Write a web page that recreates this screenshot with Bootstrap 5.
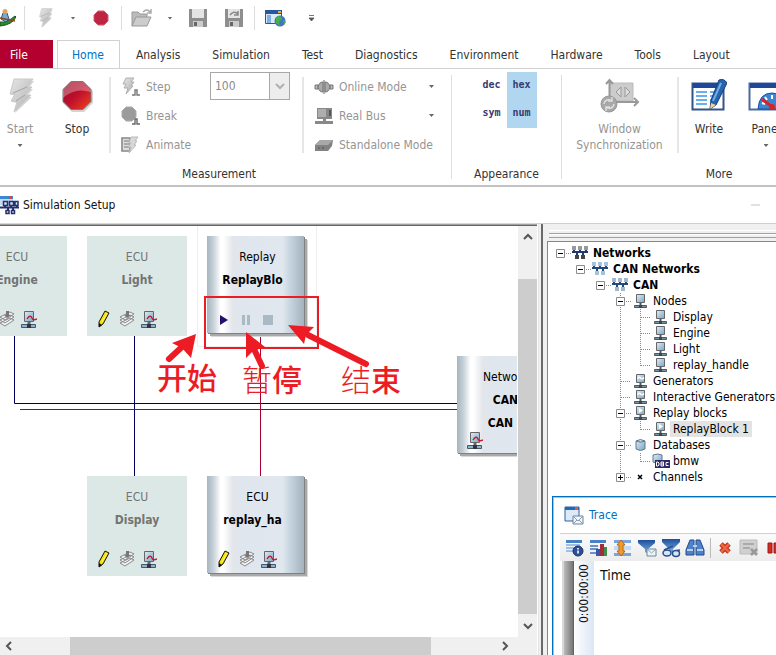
<!DOCTYPE html>
<html lang="en">
<head>
<meta charset="utf-8">
<meta name="viewport" content="width=device-width, initial-scale=1">
<title>Simulation Setup</title>
<link href="https://cdn.jsdelivr.net/npm/bootstrap@5.3.0/dist/css/bootstrap.min.css" rel="stylesheet">
<style>
body{font:12px/16px "DejaVu Sans Condensed","Roboto","Liberation Sans",sans-serif;color:#111;background:#fff;height:100vh;overflow:hidden}
button,select{font:inherit;color:inherit}
svg{display:block;flex:none}
.plain{background:none;border:0;padding:0;display:flex;align-items:center;justify-content:center;flex-shrink:0}
.i16{width:16px;height:16px}.i20{width:20px;height:20px}.i36{width:36px;height:36px}
/* quick access bar */
.quick{height:40px;padding-bottom:4px}
.w16{width:16px}.w24{width:24px}.w32{width:32px}.ms12{margin-left:12px}
.qsep{width:1px;height:24px;background:#dcdcdc;margin:0 8px}
.caret{width:5px;height:3px;background:#666;clip-path:polygon(0 0,100% 0,50% 100%)}
/* tabs */
.tabs{height:29px;border-bottom:1px solid #d2d2d2;flex-wrap:nowrap;overflow:hidden}
.tabs a{color:#333;text-decoration:none;padding:7px 16px 5px;height:29px;white-space:nowrap}
.tabs a.file{background:#b4002f;color:#fff;padding:7px 25px 5px 10px;margin-right:4px;height:28px}
.tabs a.on{color:#0070c8;border:1px solid #d2d2d2;border-bottom-color:#fff;background:#fff;padding:6px 15px 5px 14px}
/* ribbon */
.ribbon{height:118px;border-bottom:2px solid #c2c2c2;padding-top:3px;color:#333;overflow:hidden}
.grp{display:flex;flex-direction:column;flex:none}
.grp-body{height:94px;display:flex}
.grp-label{text-align:center}
.fsep{width:1px;height:104px;background:#dedede;flex:none;margin-top:3px}
.ssep{width:2px;height:76px;background:#e6e6e6;flex:none;margin-top:5px}
.off{color:#959595}
.big{flex-direction:column;justify-content:flex-start;padding-top:6px}
.big span{margin-top:7px}
.big .caret{margin-top:7px}
.g-start{width:40px}.g-stop{width:69px;padding-left:5px}
.row3{height:29px;display:flex;align-items:center;gap:5px;white-space:nowrap}
.stepcol{width:86px;margin-left:10px}
.buscol{margin-left:10px;width:137px}
.buscol .caret{margin-left:auto;margin-right:17px}
.combo{width:80px;height:28px;border:1px solid #a8a8a8;border-radius:0;appearance:none;padding:0 4px;color:#8a8a8a;opacity:1;
background:#fff linear-gradient(90deg,#a8a8a8 1px,#ededed 1px) right/20px 100% no-repeat}
.combo-wrap{display:grid;margin-left:3px;width:92px;height:28px}
.combo-wrap>*{grid-area:1/1}
.combo-wrap svg{margin:8px 0 0 64px;pointer-events:none}
.fmt{display:grid;grid-template-columns:30px 30px;grid-auto-rows:28px;margin:0 auto;align-self:flex-start;font:bold 10px/12px "DejaVu Sans Mono",monospace;color:#3a3a70}
.fmt .plain{padding-bottom:3px}
.fmt .lit{background:#b1d6f0}
.g-meas{width:451px}.g-meas .grp-label{padding-right:13px}
.g-app{width:109px}.g-more{width:314px}
.g-sync{width:115px}.g-write{width:60px}.g-panel{width:54px}
/* window title */
.wtitle{height:36px;gap:4px}
/* work area */
.work{min-height:0}
.left{min-width:0;border-top:3px solid #6a6a6a;border-image:linear-gradient(#d8d8d8 1px,#a0a0a0 1px,#a0a0a0 2px,#666 2px) 3 0 0 0;display:grid;grid-template-columns:minmax(0,1fr) 20px;grid-template-rows:minmax(0,1fr) 18px}
.canvas{position:relative;overflow:hidden;background:#fff}
.canvas>*{position:absolute}
.vbar{background:#f0f0f0;display:flex;flex-direction:column;align-items:center;border-left:1px solid #fff}
.vbar i{flex:1;width:100%;background:#cdcdcd;margin:30px 0 0}
.hbar{background:#f0f0f0;display:flex;align-items:center;grid-column:1/3}
.hbar i{height:100%;flex:1;background:#cdcdcd;margin:0 69px 0 51px}
.edge{width:10px;background:linear-gradient(90deg,#fff 1px,#e4e4e4 1px,#e4e4e4 2px,#f0f0f0 2px,#f0f0f0 4px,#696969 4px,#696969 6px,#f0f0f0 6px);border-top:1px solid #cfcfcf;flex:none}
/* diagram nodes */
.node{width:100px;height:100px;background:#dbe8e6;color:#737373;text-align:center;padding-top:13px}
.node b,.node span{display:block;white-space:nowrap}
.node b{margin-top:7px}
.node.solid{width:97px;height:97px;color:#000;background:linear-gradient(90deg,#a5b5c0,#c9d3d9 7%,#fff 14%,#fff 17%,#e4e6ea 26%,#dfe6ed 32%,#e0e7ee 78%,#c6d4de 86%,#a3b2bd);box-shadow:1px 1px 0 #808080,3px 3px 0 #a9a9a9,4px 4px 0 #d8d8d8}
.tools{display:flex;align-items:center;gap:6px;padding-left:10px;margin-top:22px}
.tools svg{width:16px;height:18px}
.n1{left:-33px;top:10px}.n2{left:87px;top:10px}.n3{left:207px;top:10px}
.n4{left:87px;top:250px}.n5{left:207px;top:250px}.n6{left:457px;top:130px}
.n3 b,.n5 b{padding-right:6px}.n3 span,.n5 span{padding-left:4px}
.n6 .tools{margin-top:0}
.n6 b+b{padding-right:10px}
.halo{left:197px;top:-1px;width:120px;height:122px;border:1px solid #eee}
.note{color:#ed1c24;font:500 30px/36px "Noto Sans CJK SC",sans-serif;white-space:nowrap}
.note i{font-style:normal;font-weight:300}
.t1{left:157px;top:132px}.t2{left:242px;top:134px}.t3{left:341px;top:134px}
/* right side */
.right{width:229px;background:#f0f0f0;border-top:1px solid #cfcfcf;flex:none;overflow:hidden}
.grip{height:4px;margin-left:2px;border-top:1px solid #fff;border-bottom:1px solid #a0a0a0;margin-top:2px}
.dock{border:1px solid #828790;border-width:1px 0 0 1px;background:#fff;margin-top:3px;min-height:0}
.tree{margin:3px 0 0 3px;color:#000}
.tree li{display:flex;height:16px;white-space:nowrap;align-items:center}
.tree svg{width:20px;height:16px}
.tree li>svg:nth-last-child(2){margin-left:-1px}
.tree button{width:20px;height:16px}
.tree li>span{padding:0 3px}
.tree .sel{background:#e3e3e3}
.trace{border:1px solid #0070c0;border-width:1px 0 0 1px;margin:11px 0 0 4px;box-shadow:inset 1px 1px 0 #0070c066}
.trace-title{height:36px;padding-left:11px;gap:5px;color:#0070c0}
.tbar{height:28px;margin-left:7px;border-top:1px solid #d0d0d0;background:linear-gradient(#fbfbfb,#ececec);padding-left:3px}
.tbar .qsep{height:20px;margin:0 2px 0 3px;background:#bbb;flex-shrink:0}
.tbody{min-height:0;margin-left:7px}
.strip{width:12px;background:linear-gradient(90deg,#d8d8d8 2px,#bbb 2px,#777 90%,#555);margin-left:2px}
.ruler{width:20px;background:linear-gradient(90deg,#fff,#dbe6f5);writing-mode:vertical-rl;line-height:20px;padding-top:3px;display:flex}
.ruler span{transform:rotate(180deg)}
.time{font-size:14px;line-height:20px;padding:4px 6px}
</style>
<script src="https://cdn.jsdelivr.net/npm/bootstrap@5.3.0/dist/js/bootstrap.bundle.min.js"></script>
</head>
<body class="d-flex flex-column">
<svg width="0" height="0" class="position-absolute" aria-hidden="true">
<defs>
<linearGradient id="gy" x2="1" y2="1"><stop stop-color="#e6e6e6"/><stop offset="1" stop-color="#b0b0b0"/></linearGradient>
<linearGradient id="rd" x2="1" y2="1"><stop stop-color="#8c0a26"/><stop offset=".5" stop-color="#c0102c"/><stop offset="1" stop-color="#f0451c"/></linearGradient>
<linearGradient id="bl" x2="1" y2="1"><stop stop-color="#e0edf5"/><stop offset="1" stop-color="#78a6c8"/></linearGradient>
<linearGradient id="fn" x2="0" y2="1"><stop stop-color="#1d4f9c"/><stop offset="1" stop-color="#7fb2e8"/></linearGradient>
</defs>
<symbol id="bolt" viewBox="0 0 36 36"><path d="M14 3h18l-6 8h5l-7 8h6L13 35l3-10-6-1 4-7H9z" fill="#aaa" opacity=".5"/><path d="M12 1h19l-6 8h5l-7 8h6L12 34l3-10-6-1 4-7H8z" fill="url(#gy)" stroke="#c9c9c9"/><path d="M11 15l14-6M14 23l9-6" stroke="#a4a4a4"/></symbol>
<symbol id="step" viewBox="0 0 20 20"><path d="M5 1h8l-3 4h3l-3 4h2l-7 8 2-6H3l2-4H2z" fill="url(#gy)" stroke="#b0b0b0"/><path d="M11 18h3v-5h2v5h3" fill="none" stroke="#777" stroke-width="1.4"/></symbol>
<symbol id="brk" viewBox="0 0 20 20"><path d="M5 1h6l4 4v6l-4 4H5l-4-4V5z" fill="#9b9b9b" stroke="#aaa"/><path d="M11 18h3v-5h2v5h3" fill="none" stroke="#666" stroke-width="1.4"/></symbol>
<symbol id="anim" viewBox="0 0 20 20"><path d="M1 3h8v13H1z" fill="#ddd" stroke="#888" stroke-width="1.6"/><path d="M3 6h5M3 9h5M3 12h5" stroke="#777"/><path d="M10 2h7l-3 4h2l-3 4h2l-7 8 2-6H7l3-4H8z" fill="#d8d8d8" stroke="#bbb"/></symbol>
<symbol id="plug" viewBox="0 0 20 20"><path d="M1 8h3v4H1zM16 8h3v4h-3z" fill="#bbb" stroke="#777"/><path d="M9 5v10q-4 0-5-5 1-5 5-5zM11 5v10q4 0 5-5-1-5-5-5z" fill="#aaa" stroke="#737373"/><path d="M10 3v14" stroke="#666"/></symbol>
<symbol id="busx" viewBox="0 0 20 20"><path d="M3 2h15v11H3z" fill="#888"/><path d="M4 3h8v8H4z" fill="#aeaeae"/><path d="M15 4h2v6h-2z" fill="#555"/><path d="M9 13h3v4H9z" fill="#888"/><path d="M1 15h18v3H1z" fill="#888"/></symbol>
<symbol id="box" viewBox="0 0 20 20"><path d="M1 10l5-5h13l-1 6-4 5H1z" fill="#828282"/><path d="M1 10l5-5h13l-5 5z" fill="#a8a8a8"/><path d="M4 13h2M8 13h2" stroke="#555"/></symbol>
<symbol id="disk" viewBox="0 0 20 20"><path d="M1 1h18v18H1z" fill="#8e8e8e"/><path d="M4 1h12v9H4z" fill="#e4e4e4"/><path d="M5 13h10v6H5z" fill="#ccc"/><path d="M6 14h3v4H6z" fill="#666"/></symbol>
<symbol id="node" viewBox="0 0 20 16"><path d="M6.500 1.500h8v8h-8z" fill="url(#bl)" stroke="#666"/><path d="M10.500 10v3" stroke="#555" stroke-width="2"/><path d="M4.500 12.500h12v2h-12z" fill="#7196b0" stroke="#555"/><path d="M9 12h3v3H9z" fill="#444"/></symbol>
<symbol id="gen" viewBox="0 0 20 16"><use href="#node"/><path d="M7.500 6q1.500-3 3-1T14 4.500" fill="none" stroke="#fff" stroke-width="1.300"/></symbol>
<symbol id="rep" viewBox="0 0 20 16"><use href="#node"/><path d="M9 3l4 2.500L9 8z" fill="#fff"/></symbol>
<symbol id="db" viewBox="0 0 20 16"><path d="M6 4v8q4.500 3 9 0V4q-4.500-3-9 0z" fill="url(#bl)" stroke="#64788c"/><path d="M6 4q4.500 2.500 9 0" fill="none" stroke="#64788c"/></symbol>
<symbol id="dbc" viewBox="0 0 20 16"><path d="M3 2v7q4.500 3 9 0V2q-4.500-2-9 0z" fill="url(#bl)" stroke="#64788c"/><path d="M5 7h15v8H5z" fill="#2e2a68"/><path d="M6.500 9v4h1.500l1-1v-2l-1-1zM11 9h2.500v4H11zM11 11h2M18.500 9.500H16v3h2.500" fill="none" stroke="#fff"/></symbol>
<symbol id="minus" viewBox="0 0 20 16"><path d="M15 8.500h5" stroke="#888" stroke-dasharray="1 1"/><path d="M5.500 4.500h8v8h-8z" fill="#fff" stroke="#8c8c8c"/><path d="M7 8.500h5" stroke="#000"/></symbol>
<symbol id="plus" viewBox="0 0 20 16"><path d="M9.500 0v4" stroke="#888" stroke-dasharray="1 1"/><use href="#minus"/><path d="M9.500 6v5" stroke="#000"/></symbol>
<symbol id="tv" viewBox="0 0 20 16"><path d="M9.500 0v16" stroke="#888" stroke-dasharray="1 1"/></symbol>
<symbol id="tt" viewBox="0 0 20 16"><path d="M9.500 0v16M10 8.500h10" stroke="#888" stroke-dasharray="1 1"/></symbol>
<symbol id="tl" viewBox="0 0 20 16"><path d="M9.500 0v9M10 8.500h10" stroke="#888" stroke-dasharray="1 1"/></symbol>
<symbol id="pen" viewBox="0 0 16 18"><path d="M8 1l4 2-6 11-4 3V12z" fill="#f5e400" stroke="#111"/><path d="M2 13l3 2-3 2z" fill="#111"/><path d="M10 3L5 12" stroke="#fff27a"/></symbol>
<symbol id="stack" viewBox="0 0 16 18"><path d="M1 13l5 3 9-6-4-2zM1 10l5 3 9-6-4-2zM1 7l5 3 9-6-4-2z" fill="#f4f4f4" stroke="#888"/><path d="M7 1h3v4h2L8 8 5 5h2z" fill="#777"/></symbol>
<symbol id="pc" viewBox="0 0 16 18"><path d="M3.500 1.500h9v10h-9z" fill="url(#bl)" stroke="#666"/><path d="M8 12v3" stroke="#666" stroke-width="3"/><path d="M.5 14.500h14v3H.5z" fill="#8db3cf" stroke="#445868"/><path d="M6 14h4v4H6z" fill="#334"/><path d="M6 9q3-5 5-1 1 3 5 1" fill="none" stroke="#c01c30" stroke-width="1.400"/></symbol>
</svg>

<header class="quick d-flex align-items-center">
<button class="plain w16" aria-label="CANoe menu"><svg width="16" height="18" viewBox="0 0 16 18"><path d="M0 13q7 1 15-6l1 1q-4 8-16 9z" fill="#2b8a2e" stroke="#1c521f"/><path d="M3 4h4l2 6-3 3-5-3z" fill="#78a9d6" stroke="#34567d"/><circle cx="5" cy="2.500" r="2.500" fill="#e3a35b"/><path d="M0 9l15 3" stroke="#8b4a1e" stroke-width="1.500"/></svg></button>
<span class="qsep"></span>
<button class="plain w24" aria-label="Start"><svg class="i20"><use href="#bolt"/></svg></button>
<button class="plain w32" aria-label="Start options"><span class="caret"></span></button>
<button class="plain w24" aria-label="Stop"><svg width="16" height="16" viewBox="0 0 16 16"><path d="M5 1h6l4 4v6l-4 4H5l-4-4V5z" fill="#bf2443" stroke="#cf5a70"/></svg></button>
<span class="qsep"></span>
<button class="plain w24" aria-label="Open"><svg width="22" height="20" viewBox="0 0 22 20"><path d="M1 18V4h6l2 2h7v3" fill="#bbb" stroke="#999"/><path d="M1 18L5 9h15l-4 9z" fill="#ccc" stroke="#999"/><path d="M12 4q4-4 7 0M20 1v4h-4" fill="none" stroke="#aaa" stroke-width="1.500"/></svg></button>
<button class="plain w32" aria-label="Recent files"><span class="caret"></span></button>
<button class="plain w24" aria-label="Save"><svg class="i20"><use href="#disk"/></svg></button>
<button class="plain w24 ms12" aria-label="Save as"><svg class="i20" viewBox="0 0 20 20"><use href="#disk"/><path d="M6 7q4-5 8-1M14 3v4h-4" fill="none" stroke="#888" stroke-width="1.500"/></svg></button>
<span class="qsep"></span>
<button class="plain w24" aria-label="Desktops"><svg width="22" height="20" viewBox="0 0 22 20"><path d="M1.500 2.500h16v13h-16z" fill="#d8e9fa" stroke="#2a56a0"/><path d="M1 2h17v4H1z" fill="#2a56a0"/><path d="M14 3h3v2h-3z" fill="#e8b02c"/><path d="M3 7h4v8H3z" fill="#7fb0e4"/><circle cx="16" cy="13" r="5.500" fill="#3d76c4"/><path d="M14 8q4 0 4 3l-3 3 1 4-4-3v-5zM19 12l3 2-2 3z" fill="#4cad4c"/></svg></button>
<button class="plain w24 ms12" aria-label="Customize"><svg width="7" height="7" viewBox="0 0 7 7"><path d="M1 .5h5M1 3h5L3.500 6z" stroke="#555" fill="#555" stroke-width=".8"/></svg></button>
</header>

<nav class="tabs d-flex">
<a href="#" class="file">File</a><a href="#" class="on">Home</a><a href="#">Analysis</a><a href="#">Simulation</a><a href="#">Test</a><a href="#">Diagnostics</a><a href="#">Environment</a><a href="#">Hardware</a><a href="#">Tools</a><a href="#">Layout</a>
</nav>

<section class="ribbon d-flex">
<div class="grp g-meas">
<div class="grp-body">
<button class="plain big off g-start"><svg class="i36"><use href="#bolt"/></svg><span>Start</span><i class="caret"></i></button>
<button class="plain big g-stop"><svg class="i36" viewBox="0 0 36 36"><path d="M12 3h12l9 9v12l-9 9H12l-9-9V12z" fill="#aaa" opacity=".5" transform="translate(1 1)"/><path d="M12 3.500h12l8 8v12l-8 8H12l-8-8v-12z" fill="url(#rd)" stroke="#777"/><path d="M12 4h12l8 8v2Q16 9 4 20v-8z" fill="#fff" opacity=".3"/></svg><span>Stop</span></button>
<span class="ssep"></span>
<div class="stepcol off">
<div class="row3"><svg class="i20"><use href="#step"/></svg>Step</div>
<div class="row3"><svg class="i20"><use href="#brk"/></svg>Break</div>
<div class="row3"><svg class="i20"><use href="#anim"/></svg>Animate</div>
</div>
<div class="combo-wrap"><select class="combo" disabled aria-label="Step size"><option>100</option></select><svg width="12" height="12" viewBox="0 0 12 12"><path d="M2 4l4 4 4-4" fill="none" stroke="#b0b0b0" stroke-width="2"/></svg></div>
<span class="ssep"></span>
<div class="buscol off">
<div class="row3"><svg class="i20"><use href="#plug"/></svg>Online Mode<i class="caret"></i></div>
<div class="row3"><svg class="i20"><use href="#busx"/></svg>Real Bus<i class="caret"></i></div>
<div class="row3"><svg class="i20"><use href="#box"/></svg>Standalone Mode</div>
</div>
</div>
<div class="grp-label">Measurement</div>
</div>
<span class="fsep"></span>
<div class="grp g-app">
<div class="grp-body"><div class="fmt"><button class="plain">dec</button><button class="plain lit">hex</button><button class="plain">sym</button><button class="plain lit">num</button></div></div>
<div class="grp-label">Appearance</div>
</div>
<span class="fsep"></span>
<div class="grp g-more">
<div class="grp-body">
<button class="plain big off g-sync"><svg width="40" height="36" viewBox="0 0 40 36"><path d="M10 5h23v18H10z" fill="#ccc" stroke="#bbb"/><path d="M9.500 34V3M6 6l3.500-4L13 6M9 24h28M34 20l4 4-4 4" fill="none" stroke="#999" stroke-width="2"/><path d="M21 9v10l-5-5zM25 9v10l5-5z" fill="#ddd" stroke="#999"/><circle cx="9" cy="26" r="8" fill="#a8a8a8" stroke="#999"/><path d="M4 26q1-5 6-4l2 1M14 26q-1 5-6 4l-2-1M12 19v4H8M6 33v-4h4" fill="none" stroke="#ddd" stroke-width="1.500"/></svg><span>Window<br>Synchronization</span></button>
<span class="ssep"></span>
<button class="plain big g-write"><svg class="i36" viewBox="0 0 36 36"><path d="M1.500 5.500h31v26h-31z" fill="#fff" stroke="#34548c" stroke-width="2"/><path d="M2 5h30v5H2z" fill="#1d489a"/><path d="M5 14h11M5 18h11M5 22h11M5 26h11M19 14h10M19 18h8M19 22h6M19 26h4" stroke="#68b0ee" stroke-width="2"/><path d="M28 2q5-2 8 3L25 27l-6 4 1-9z" fill="#2464b0" stroke="#173c74"/><path d="M30 5L22 23" stroke="#72aae2" stroke-width="2"/><path d="M20 25l5 2-6 4z" fill="#f4cf96"/></svg><span>Write</span></button>
<button class="plain big g-panel"><svg class="i36" viewBox="0 0 36 36"><path d="M1.500 5.500h32v26h-32z" fill="#fff" stroke="#4b6ba0" stroke-width="2"/><path d="M2 5h32v5H2z" fill="#1d489a"/><path d="M10 31q1-16 14-16t13 16z" fill="#3a86d6" stroke="#17549c"/><path d="M14 25l3 1M17 19l2 3M24 17v4" stroke="#fff" stroke-width="2"/><path d="M14 21l9 7" stroke="#d22" stroke-width="3"/><circle cx="24" cy="29" r="3" fill="#d22"/></svg><span>Panel</span><i class="caret"></i></button>
</div>
<div class="grp-label">More</div>
</div>
</section>

<div class="wtitle d-flex align-items-center pe-3 flex-shrink-0">
<svg width="19" height="20" viewBox="0 0 19 20"><path d="M0 1h13v9H0z" fill="#c4ddf4"/><path d="M0 1h13v3H0z" fill="#3e86cf"/><path d="M9 1h3v3H9z" fill="#e5452b"/><path d="M0 12.500h19M5 6v6M11 6v6M17 6v6M8 13v4M13 13v4" stroke="#26306e" stroke-width="2"/><path d="M3.500 6.500h4v4h-4zM9.500 6.500h4v4h-4zM15 6.500h3v4h-3zM6 15.500h3v3H6zM11.500 15.500h3v3h-3z" fill="#cfe2f2" stroke="#26306e" stroke-width="1.500"/></svg>
<span>Simulation Setup</span>
<button class="plain ms-auto" aria-label="Minimize"><svg width="9" height="3"><path d="M0 1h9" stroke="#c4c4c4"/></svg></button>
</div>

<main class="work d-flex flex-fill">
<section class="left flex-fill">
<div class="canvas">
<div class="halo"></div>
<svg width="520" height="420" viewBox="0 226 520 420"><path d="M14.500 336v67.500H457M134.500 336v140" fill="none" stroke="#000060"/><path d="M20 409.500h437" stroke="#a80030"/><path d="M260.500 336v140" stroke="#a80030"/></svg>
<div class="node n1"><span>ECU</span><b>Engine</b><div class="tools"><svg><use href="#pen"/></svg><svg><use href="#stack"/></svg><svg><use href="#pc"/></svg></div></div>
<div class="node n2"><span>ECU</span><b>Light</b><div class="tools"><svg><use href="#pen"/></svg><svg><use href="#stack"/></svg><svg><use href="#pc"/></svg></div></div>
<div class="node solid n3"><span>Replay</span><b>ReplayBlo</b><div class="tools"><svg viewBox="0 0 16 18"><path d="M3 5l8 5-8 5z" fill="#23106e"/></svg><svg viewBox="0 0 16 18"><path d="M3 5h3v10H3zM8 5h3v10H8z" fill="#a9bac4"/></svg><svg viewBox="0 0 16 18"><path d="M2 5h10v10H2z" fill="#a9bac4"/></svg></div></div>
<div class="node n4"><span>ECU</span><b>Display</b><div class="tools"><svg><use href="#pen"/></svg><svg><use href="#stack"/></svg><svg><use href="#pc"/></svg></div></div>
<div class="node solid n5"><span>ECU</span><b>replay_ha</b><div class="tools"><svg><use href="#pen"/></svg><svg><use href="#stack"/></svg><svg><use href="#pc"/></svg></div></div>
<div class="node solid n6"><span>Network</span><b>CAN</b><b>CAN</b><div class="tools"><svg><use href="#pc"/></svg></div></div>
<svg width="420" height="180" viewBox="0 226 420 180"><path d="M205 297h113v51H205z" fill="none" stroke="#ed1c24" stroke-width="2"/><path d="M169 359l15-14M262 366l-9-19M366 364l-58-29" stroke="#ed1c24" stroke-width="6" stroke-linecap="round"/><path d="M196 334l-24 9 10 5 9 10zM246 332v26l7-7 12-4zM288 325l16 19 2-9 8-8z" fill="#ed1c24"/></svg>
<div class="note t1">开始</div><div class="note t2"><i>暂</i>停</div><div class="note t3"><i>结</i>束</div>
</div>
<div class="vbar"><svg width="12" height="23" viewBox="0 0 12 23"><path d="M2 13l4-4 4 4" fill="none" stroke="#555" stroke-width="2"/></svg><i></i><svg width="12" height="23" viewBox="0 0 12 23"><path d="M2 10l4 4 4-4" fill="none" stroke="#555" stroke-width="2"/></svg></div>
<div class="hbar"><svg width="19" height="12" viewBox="0 0 19 12"><path d="M11 2L7 6l4 4" fill="none" stroke="#555" stroke-width="2"/></svg><i></i><svg width="37" height="12" viewBox="0 0 37 12"><path d="M3 2l4 4-4 4" fill="none" stroke="#555" stroke-width="2"/></svg></div>
</section>
<div class="edge"></div>
<aside class="right d-flex flex-column">
<div class="pt-1"><div class="grip"></div></div><div class="grip mt-0"></div>
<div class="dock flex-fill d-flex flex-column">
<ul class="tree list-unstyled">
<li><button class="plain" aria-label="Collapse"><svg><use href="#minus"/></svg></button><svg viewBox="0 0 20 16"><path d="M2 7h16M4 3v4M10 3v4M16 3v4M7 7v5M13 7v5" stroke="#1f3a70" stroke-width="2"/><path d="M2 1h4v4H2zM8 1h4v4H8zM14 1h4v4h-4z" fill="#999"/><path d="M5 10h4v4H5zM11 10h4v4h-4z" fill="#444"/></svg><span class="fw-bold">Networks</span></li>
<li><svg></svg><button class="plain" aria-label="Collapse"><svg><use href="#minus"/></svg></button><svg viewBox="0 0 20 16"><path d="M2 7h16M4 3v4M10 3v4M16 3v4M7 7v5M13 7v5" stroke="#1f4a80" stroke-width="2"/><path d="M2 1h4v4H2zM8 1h4v4H8zM14 1h4v4h-4zM5 10h4v4H5zM11 10h4v4h-4z" fill="#a4c4dc"/></svg><span class="fw-bold">CAN Networks</span></li>
<li><svg></svg><svg></svg><button class="plain" aria-label="Collapse"><svg><use href="#minus"/></svg></button><svg viewBox="0 0 20 16"><path d="M2 7h16M4 3v4M10 3v4M16 3v4M7 7v5M13 7v5" stroke="#1f4a80" stroke-width="2"/><path d="M2 1h4v4H2zM8 1h4v4H8zM14 1h4v4h-4zM5 10h4v4H5zM11 10h4v4h-4z" fill="#a4b8cc"/></svg><span class="fw-bold">CAN</span></li>
<li><svg></svg><svg></svg><svg></svg><button class="plain" aria-label="Collapse"><svg viewBox="0 0 20 16"><use href="#tv"/><use href="#minus"/></svg></button><svg><use href="#node"/></svg><span>Nodes</span></li>
<li><svg></svg><svg></svg><svg></svg><svg><use href="#tv"/></svg><svg><use href="#tt"/></svg><svg><use href="#node"/></svg><span>Display</span></li>
<li><svg></svg><svg></svg><svg></svg><svg><use href="#tv"/></svg><svg><use href="#tt"/></svg><svg><use href="#node"/></svg><span>Engine</span></li>
<li><svg></svg><svg></svg><svg></svg><svg><use href="#tv"/></svg><svg><use href="#tt"/></svg><svg><use href="#node"/></svg><span>Light</span></li>
<li><svg></svg><svg></svg><svg></svg><svg><use href="#tv"/></svg><svg><use href="#tl"/></svg><svg><use href="#node"/></svg><span>replay_handle</span></li>
<li><svg></svg><svg></svg><svg></svg><svg><use href="#tt"/></svg><svg><use href="#gen"/></svg><span>Generators</span></li>
<li><svg></svg><svg></svg><svg></svg><svg><use href="#tt"/></svg><svg><use href="#gen"/></svg><span>Interactive Generators</span></li>
<li><svg></svg><svg></svg><svg></svg><button class="plain" aria-label="Collapse"><svg viewBox="0 0 20 16"><use href="#tv"/><use href="#minus"/></svg></button><svg><use href="#rep"/></svg><span>Replay blocks</span></li>
<li><svg></svg><svg></svg><svg></svg><svg><use href="#tv"/></svg><svg><use href="#tl"/></svg><svg><use href="#rep"/></svg><span class="sel">ReplayBlock 1</span></li>
<li><svg></svg><svg></svg><svg></svg><button class="plain" aria-label="Collapse"><svg viewBox="0 0 20 16"><use href="#tv"/><use href="#minus"/></svg></button><svg><use href="#db"/></svg><span>Databases</span></li>
<li><svg></svg><svg></svg><svg></svg><svg><use href="#tv"/></svg><svg><use href="#tl"/></svg><svg><use href="#dbc"/></svg><span>bmw</span></li>
<li><svg></svg><svg></svg><svg></svg><button class="plain" aria-label="Expand"><svg><use href="#plus"/></svg></button><svg viewBox="0 0 20 16"><path d="M8 6l4 4M12 6l-4 4" stroke="#000" stroke-width="1.500"/></svg><span>Channels</span></li>
</ul>
<div class="trace flex-fill d-flex flex-column">
<div class="trace-title d-flex align-items-center"><svg width="20" height="19" viewBox="0 0 20 19"><path d="M1 1h14v14H1z" fill="#dceaf8" stroke="#2a60a4"/><path d="M1 1h14v3H1z" fill="#2168b8"/><path d="M11 1h3v3h-3z" fill="#f05a2a"/><path d="M9 10h10v8H9z" fill="#f2f6fa" stroke="#6a8098"/><path d="M9 10l5 5 5-5M9 18l4-4M19 18l-4-4" fill="none" stroke="#8ba0b4"/></svg>Trace</div>
<div class="tbar d-flex align-items-center">
<button class="plain w24" aria-label="Details"><svg class="i20" viewBox="0 0 20 20"><path d="M1 2h16v3H1z" fill="#4a80c4"/><path d="M1 7h14M1 10h9M1 13h9" stroke="#9fc0e4" stroke-width="2"/><circle cx="13" cy="13" r="5" fill="#2c4f96" stroke="#18306c"/><path d="M13 10v1.500M13 12.500v3" stroke="#fff" stroke-width="1.600"/></svg></button>
<button class="plain w24" aria-label="Statistics"><svg class="i20" viewBox="0 0 20 20"><path d="M1 2h16v3H1z" fill="#4a80c4"/><path d="M1 8h8M1 11h8M1 15h8" stroke="#6794cc" stroke-width="2"/><path d="M7 11h4v7H7z" fill="#3b55a8"/><path d="M11 6h4v12h-4z" fill="#a32c3c"/><path d="M15 9h3v9h-3z" fill="#3f8f4b"/></svg></button>
<button class="plain w24" aria-label="Fixed position"><svg class="i20" viewBox="0 0 20 20"><path d="M1 2h17v3H1zM1 15h17v3H1z" fill="#79a4dc"/><path d="M1 8h17v4H1z" fill="#c4daf2"/><path d="M8 2l4 5h-2v6h2l-4 5-4-5h2V7H4z" fill="#f29a2c" stroke="#b5641a"/></svg></button>
<button class="plain w24" aria-label="Message filter"><svg class="i20" viewBox="0 0 20 20"><path d="M1 2h17v3l-7 6v5l-3-2v-3L1 5z" fill="url(#fn)"/><path d="M10 11h9v7h-9z" fill="#edf3f8" stroke="#6f8798"/><path d="M10 11l4.500 4 4.500-4" fill="none" stroke="#8aa"/></svg></button>
<button class="plain w24" aria-label="Analysis filter"><svg class="i20" viewBox="0 0 20 20"><path d="M1 1h18v3l-7 7v4l-4-2v-2L1 4z" fill="url(#fn)"/><path d="M3 12l9-4M19 12l-6 1" stroke="#2a4d8c" stroke-width="1.500"/><ellipse cx="6" cy="15" rx="4" ry="3" fill="#d6e6f6" stroke="#2a4d8c" stroke-width="1.500"/><ellipse cx="15" cy="15.500" rx="3.500" ry="3" fill="#d6e6f6" stroke="#2a4d8c" stroke-width="1.500"/></svg></button>
<button class="plain w24" aria-label="Find"><svg class="i20" viewBox="0 0 20 20"><path d="M5 2h4v15H1v-5zM15 2h-4v15h8v-5z" fill="#4f82c8" stroke="#244a8c"/><path d="M2 12h6M12 12h6M8 8h4" stroke="#b8d0ee" stroke-width="2"/></svg></button>
<span class="qsep"></span>
<button class="plain w24" aria-label="Clear"><svg class="i20" viewBox="0 0 20 20"><path d="M6 6l8 8M14 6l-8 8" stroke="#b8321c" stroke-width="5"/><path d="M6 6l8 8M14 6l-8 8" stroke="#ee6340" stroke-width="2.500"/></svg></button>
<button class="plain w24" aria-label="Close view" disabled><svg class="i20" viewBox="0 0 20 20"><path d="M1 2h17v14H1z" fill="#d0d0d0" stroke="#bbb"/><path d="M4 6h11M4 10h7" stroke="#aaa" stroke-width="2"/><path d="M12 11l6 6M18 11l-6 6" stroke="#999" stroke-width="2.500"/></svg></button>
<button class="plain w24" aria-label="Pause"><svg class="i20" viewBox="0 0 20 20"><path d="M5 5h4v10H5zM11 5h4v10h-4z" fill="#d42a20" stroke="#a01818"/></svg></button>
</div>
<div class="tbody d-flex flex-fill"><div class="strip"></div><div class="ruler"><span>0:00:00:00</span></div><div class="time">Time</div></div>
</div>
</div>
</aside>
</main>
</body>
</html>
